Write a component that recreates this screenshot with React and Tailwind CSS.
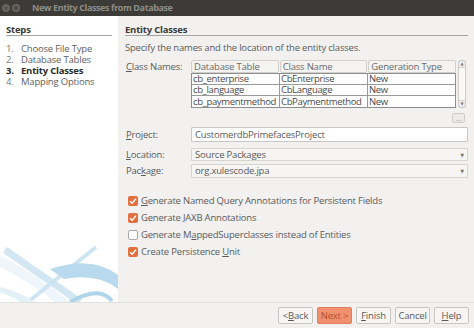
import React from 'react';

const steps = [
  { n: '1.', label: 'Choose File Type' },
  { n: '2.', label: 'Database Tables' },
  { n: '3.', label: 'Entity Classes', active: true },
  { n: '4.', label: 'Mapping Options' },
];

const rows = [
  ['cb_enterprise', 'CbEnterprise', 'New'],
  ['cb_language', 'CbLanguage', 'New'],
  ['cb_paymentmethod', 'CbPaymentmethod', 'New'],
];

const options = [
  { pre: '', u: 'G', post: 'enerate Named Query Annotations for Persistent Fields', checked: true },
  { pre: 'Generate ', u: 'J', post: 'AXB Annotations', checked: true },
  { pre: 'Generate M', u: 'a', post: 'ppedSuperclasses instead of Entities', checked: false },
  { pre: 'Create Persistence ', u: 'U', post: 'nit', checked: true },
];

const Check = ({ checked }) =>
  checked ? (
    <span className="w-[10px] h-[10px] rounded-[2px] bg-[#e2703f] flex items-center justify-center">
      <svg width="8" height="8" viewBox="0 0 8 8">
        <path d="M1 4.2 L3.2 6.3 L7 1.6" stroke="#fff" strokeWidth="1.4" fill="none" />
      </svg>
    </span>
  ) : (
    <span className="w-[10px] h-[10px] rounded-[2px] bg-white border border-[#a9a9a9]" />
  );

const Field = ({ u, rest, pre = '', value, dropdown, h, cls = '' }) => (
  <div className={`flex items-center ${cls}`}>
    <span className="w-[66px] pl-[1px] text-[#5a5a5a]">
      {pre}<span className="underline">{u}</span>{rest}
    </span>
    <div
      className={`flex-1 ${h} flex items-center justify-between pl-[3px] pr-[3px] rounded-[1px] ${dropdown ? 'bg-[#f6f5f4] border border-[#d6d4d0]' : 'bg-white border border-[#c9c7c3]'}`}
    >
      <span className="text-[#5a5a5a]">{value}</span>
      {dropdown && <span className="text-[5px] text-[#777]">▼</span>}
    </div>
  </div>
);

const Btn = ({ children, primary }) => (
  <button
    className={`h-[17px] w-[35px] rounded-[2px] flex items-center justify-center ${primary ? 'bg-[#f0906e] border border-[#e27d5b] text-[#b4502f]' : 'bg-[#f7f6f5] border border-[#c8c6c2] text-[#5a5a5a]'}`}
  >
    {children}
  </button>
);

export default function App() {
  return (
    <div
      className="w-[474px] h-[328px] flex flex-col bg-[#f2f1f0] overflow-hidden text-[9.5px] tracking-[-0.2px] leading-[10px]"
      style={{ fontFamily: '"Open Sans", "DejaVu Sans", sans-serif' }}
    >
      {/* title bar */}
      <div className="h-[16px] bg-[#3c3b37] flex items-center pl-[2px]">
        <span className="w-[8px] h-[8px] rounded-full bg-[#66645f] flex items-center justify-center text-[7px] leading-none text-[#3c3b37]">×</span>
        <span className="ml-[2px] w-[8px] h-[8px] rounded-full bg-[#66645f] flex items-center justify-center">
          <span className="w-[4px] h-[4px] rounded-full border border-[#3c3b37]" />
        </span>
        <span className="ml-[12px] text-[#8f8d87] font-bold text-[9px] tracking-[-0.4px]">New Entity Classes from Database</span>
      </div>

      <div className="flex flex-1">
        {/* steps panel */}
        <div className="w-[118px] bg-white relative overflow-hidden pl-[6px] pr-[6px] pt-[9px]">
          <div className="h-[10px] font-bold text-[#3a3a3a]">Steps</div>
          <div className="border-b border-[#a3a3a3]" />
          <div className="mt-[7px] flex flex-col text-[#5f5f5f]">
            {steps.map((s) => (
              <div key={s.n} className={`flex h-[11px] leading-[11px] ${s.active ? 'font-bold text-[#2a2a2a]' : ''}`}>
                <span className={`w-[15px] ${s.active ? '' : 'text-[#777]'}`}>{s.n}</span>
                <span>{s.label}</span>
              </div>
            ))}
          </div>
          <svg className="absolute left-0 bottom-0" width="118" height="65" viewBox="0 0 118 65">
            <path d="M0 18 Q40 40 70 65 L55 65 Q30 45 0 30 Z" fill="#eef6fb" />
            <path d="M5 13 L80 65" stroke="#d3e7f3" strokeWidth="7" />
            <path d="M28 65 L96 10" stroke="#cfe4f1" strokeWidth="4" />
            <path d="M50 32 Q92 18 118 38 L118 52 Q98 36 64 42 Z" fill="#b9daee" />
            <path d="M70 65 Q100 48 112 64" stroke="#b0d4ea" strokeWidth="4" fill="none" />
            <path d="M0 50 Q20 55 35 65 L20 65 Q10 58 0 56 Z" fill="#e3f0f8" />
          </svg>
        </div>

        {/* content */}
        <div className="flex-1 pl-[7px] pr-[6px] pt-[9px] flex flex-col">
          <div className="h-[10px] font-bold text-[#3a3a3a]">Entity Classes</div>
          <div className="border-b border-[#a3a3a3]" />
          <div className="mt-[7px] text-[#5a5a5a]">Specify the names and the location of the entity classes.</div>

          <div className="flex mt-[7px]">
            <span className="w-[66px] pl-[1px] pt-[2px] text-[#5a5a5a]">
              <span className="underline">C</span>lass Names:
            </span>
            <div className="flex-1 flex">
              <div className="w-[265px] flex flex-col">
                <div className="flex h-[13px] gap-[1px]">
                  {['Database Table', 'Class Name', 'Generation Type'].map((h) => (
                    <div key={h} className="flex-1 bg-[#f4f3f2] border border-[#d2d0cc] rounded-[2px] pl-[2px] flex items-center text-[#6a6a6a]">
                      {h}
                    </div>
                  ))}
                </div>
                <div className="border border-[#8e8e8e] bg-white tracking-[-0.35px]">
                  {rows.map((r, i) => (
                    <div key={i} className={`flex h-[11px] ${i < 2 ? 'border-b border-[#9a9a9a]' : ''}`}>
                      {r.map((c, j) => (
                        <div key={j} className={`flex-1 pl-[1px] flex items-center text-[#4a4a4a] whitespace-nowrap ${j < 2 ? 'border-r border-[#9a9a9a]' : ''}`}>
                          {c}
                        </div>
                      ))}
                    </div>
                  ))}
                </div>
              </div>
              <div className="w-[8px] ml-[2px] flex flex-col bg-[#eceae8] border border-[#cfcdc9] rounded-[2px]">
                <span className="text-[4px] leading-[6px] text-[#777] text-center">▲</span>
                <div className="flex-1 bg-[#f8f8f7] border-y border-[#d5d3cf] rounded-[2px]" />
                <span className="text-[4px] leading-[6px] text-[#777] text-center">▼</span>
              </div>
            </div>
          </div>

          <div className="flex justify-end mt-[5px] pr-[3px]">
            <span className="w-[13px] h-[10px] border border-[#d0ceca] rounded-[2px] bg-[#eceae8] text-[7px] leading-[6px] tracking-[0px] text-[#9a9a9a] flex items-end justify-center">...</span>
          </div>

          <Field cls="mt-[4px]" h="h-[15px]" u="P" rest="roject:" value="CustomerdbPrimefacesProject" />
          <Field cls="mt-[6px]" h="h-[13px]" u="L" rest="ocation:" value="Source Packages" dropdown />
          <Field cls="mt-[3px]" h="h-[14px]" pre="Pac" u="k" rest="age:" value="org.xulescode.jpa" dropdown />

          <div className="mt-[17px] pl-[3px] flex flex-col gap-[6px]">
            {options.map((o, i) => (
              <div key={i} className="flex items-center gap-[3px] h-[11px] text-[#5a5a5a]">
                <Check checked={o.checked} />
                <span>
                  {o.pre}<span className="underline">{o.u}</span>{o.post}
                </span>
              </div>
            ))}
          </div>
        </div>
      </div>

      {/* bottom bar */}
      <div className="h-[26px] border-t border-[#e2e0dd] flex items-center justify-end gap-[4px] pr-[5px]">
        <Btn>&lt; <span className="underline">B</span>ack</Btn>
        <Btn primary>Next &gt;</Btn>
        <Btn><span className="underline">F</span>inish</Btn>
        <Btn>Cancel</Btn>
        <Btn><span className="underline">H</span>elp</Btn>
      </div>
    </div>
  );
}
